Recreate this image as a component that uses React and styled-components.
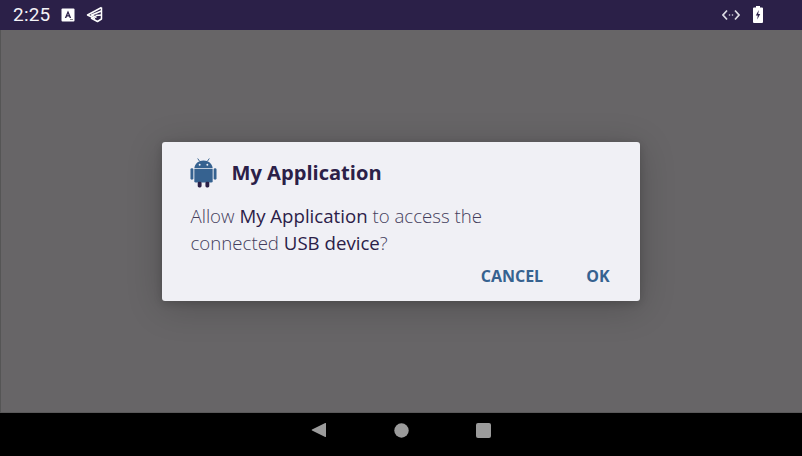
import React from 'react'
import styled, { createGlobalStyle } from 'styled-components'

const Global = createGlobalStyle`
  html, body { margin: 0; padding: 0; background: #000; }
  body { font-family: "Open Sans", "Liberation Sans", sans-serif; }
`

const Screen = styled.div`
  width: 802px;
  height: 456px;
  display: flex;
  flex-direction: column;
  overflow: hidden;
`

const StatusBar = styled.div`
  height: 30px;
  background: #2b2048;
  display: flex;
  align-items: center;
  justify-content: space-between;
  padding: 0 39px 1px 13px;
  box-sizing: border-box;
  color: #fff;
  flex: none;
`

const StatusGroup = styled.div`
  display: flex;
  align-items: center;
  gap: ${p => p.$gap}px;
`

const Clock = styled.span`
  font-family: "Roboto", sans-serif;
  font-size: 19px;
  letter-spacing: 0.2px;
  color: #f4f3f7;
`

const Scrim = styled.div`
  flex: 1;
  background: #676567;
  border-left: 1px solid #555;
  border-bottom: 1px solid #5a595a;
  display: flex;
  align-items: center;
  justify-content: center;
`

const Dialog = styled.div`
  width: 478px;
  height: 159px;
  margin-right: 2px;
  box-sizing: border-box;
  background: #f0f0f5;
  border-radius: 3px;
  box-shadow: 0 6px 36px rgba(0, 0, 0, 0.2), 0 2px 8px rgba(0, 0, 0, 0.16);
  padding: 14px 30px 0 28px;
  display: flex;
  flex-direction: column;
`

const Header = styled.div`
  display: flex;
  align-items: center;
  gap: 15px;
  height: 33px;
`

const Title = styled.div`
  font-size: 20.1px;
  font-weight: 700;
  color: #2b2048;
  line-height: 33px;
`

const Message = styled.div`
  margin: 13px 0 0 1px;
  width: 330px;
  font-size: 18.65px;
  font-weight: 300;
  line-height: 27px;
  color: #443d5c;
`

const Strong = styled.span`
  font-weight: 400;
  color: #2b2048;
`

const Actions = styled.div`
  display: flex;
  justify-content: flex-end;
  gap: 43px;
  margin-top: 9px;
`

const Action = styled.button`
  all: unset;
  font-family: "Open Sans", sans-serif;
  font-size: 16px;
  font-weight: 700;
  line-height: 22px;
  color: #366290;
`

const NavBar = styled.div`
  flex: none;
  height: 43px;
  box-sizing: border-box;
  background: #000;
  display: flex;
  align-items: center;
  justify-content: center;
  gap: 67px;
  padding: 0 0 9px 0;
`

const AndroidIcon = () => (
  <svg width="27" height="32" viewBox="0 0 28 32">
    <path d="M8 2l2 3M20 2l-2 3" stroke="#366290" strokeWidth="1" fill="none" />
    <path d="M4.500 12C5 7 9 4 14 4s9 3 9.500 8z" fill="#366290" />
    <circle cx="10" cy="8.500" r="1" fill="#f0f0f5" />
    <circle cx="18" cy="8.500" r="1" fill="#f0f0f5" />
    <path d="M4.500 13h19v12.500a1.500 1.500 0 0 1-1.500 1.500H6a1.500 1.500 0 0 1-1.500-1.500z" fill="#366290" />
    <rect x="0.500" y="12" width="3" height="12" rx="1.500" fill="#366290" />
    <rect x="24.500" y="12" width="3" height="12" rx="1.500" fill="#366290" />
    <rect x="8" y="26" width="4" height="6" rx="1.500" fill="#2b2048" />
    <rect x="16" y="26" width="4" height="6" rx="1.500" fill="#2b2048" />
  </svg>
)

const KeyboardBadge = () => (
  <svg width="14" height="14" viewBox="0 0 14 14">
    <rect x="0.500" y="0.500" width="13" height="13" rx="1" fill="#fff" />
    <path d="M7 2.500L3.800 10h1.500l.6-1.600h2.200l.6 1.600h1.500L7 2.500zM6.400 7.200L7 5.500l.6 1.700z" fill="#2b2048" />
    <rect x="9" y="11" width="3" height="1" fill="#888" />
  </svg>
)

const VsIcon = () => (
  <svg width="17" height="17" viewBox="0 0 17 17" fill="none" stroke="#fff" strokeWidth="1.500" strokeLinejoin="round">
    <path d="M15.500 1.500L1.500 9l7.500 3.500" />
    <path d="M15.500 5L5.500 9l5 2.500" />
    <path d="M15.500 1.500V13l-4 2.500L5 12" />
    <path d="M15.500 9l-6 .5" />
  </svg>
)

const CodeDots = () => (
  <svg width="18" height="12" viewBox="0 0 18 12" fill="none" stroke="#dcdbe4" strokeWidth="1.700">
    <path d="M5 1.500L1 6l4 4.500M13 1.500L17 6l-4 4.500" />
    <circle cx="7.500" cy="6" r="0.800" fill="#dcdbe4" stroke="none" />
    <circle cx="10.500" cy="6" r="0.800" fill="#dcdbe4" stroke="none" />
  </svg>
)

const BatteryCharging = () => (
  <svg width="10" height="17" viewBox="0 0 10 17">
    <path d="M3 0h4v1.500h2a1 1 0 0 1 1 1V16a1 1 0 0 1-1 1H1a1 1 0 0 1-1-1V2.500a1 1 0 0 1 1-1h2z" fill="#fff" />
    <path d="M5.800 4L2.800 9.500h2L4.200 13.500l3-5.500h-2z" fill="#2b2048" />
  </svg>
)

const BackIcon = () => (
  <svg width="16" height="16" viewBox="0 0 16 16">
    <path d="M15 1.500v13a.5 .5 0 0 1-.8.4L1 8.500a.6 .6 0 0 1 0-1L14.200 1.100a.5 .5 0 0 1 .8.4z" fill="#9b9b9b" />
  </svg>
)

const HomeIcon = () => (
  <svg width="15" height="15" viewBox="0 0 15 15">
    <circle cx="7.500" cy="7.500" r="7.200" fill="#9b9b9b" />
  </svg>
)

const RecentsIcon = () => (
  <svg width="15" height="15" viewBox="0 0 15 15">
    <rect x="0" y="0" width="15" height="15" rx="2" fill="#9b9b9b" />
  </svg>
)

export default function App() {
  return (
    <>
      <Global />
      <Screen>
        <StatusBar>
          <StatusGroup $gap={11}>
            <Clock>2:25</Clock>
            <KeyboardBadge />
            <VsIcon />
          </StatusGroup>
          <StatusGroup $gap={13}>
            <CodeDots />
            <BatteryCharging />
          </StatusGroup>
        </StatusBar>
        <Scrim>
          <Dialog>
            <Header>
              <AndroidIcon />
              <Title>My Application</Title>
            </Header>
            <Message>
              Allow <Strong>My Application</Strong> to access the connected <Strong>USB device</Strong>?
            </Message>
            <Actions>
              <Action>CANCEL</Action>
              <Action>OK</Action>
            </Actions>
          </Dialog>
        </Scrim>
        <NavBar>
          <BackIcon />
          <HomeIcon />
          <RecentsIcon />
        </NavBar>
      </Screen>
    </>
  )
}
